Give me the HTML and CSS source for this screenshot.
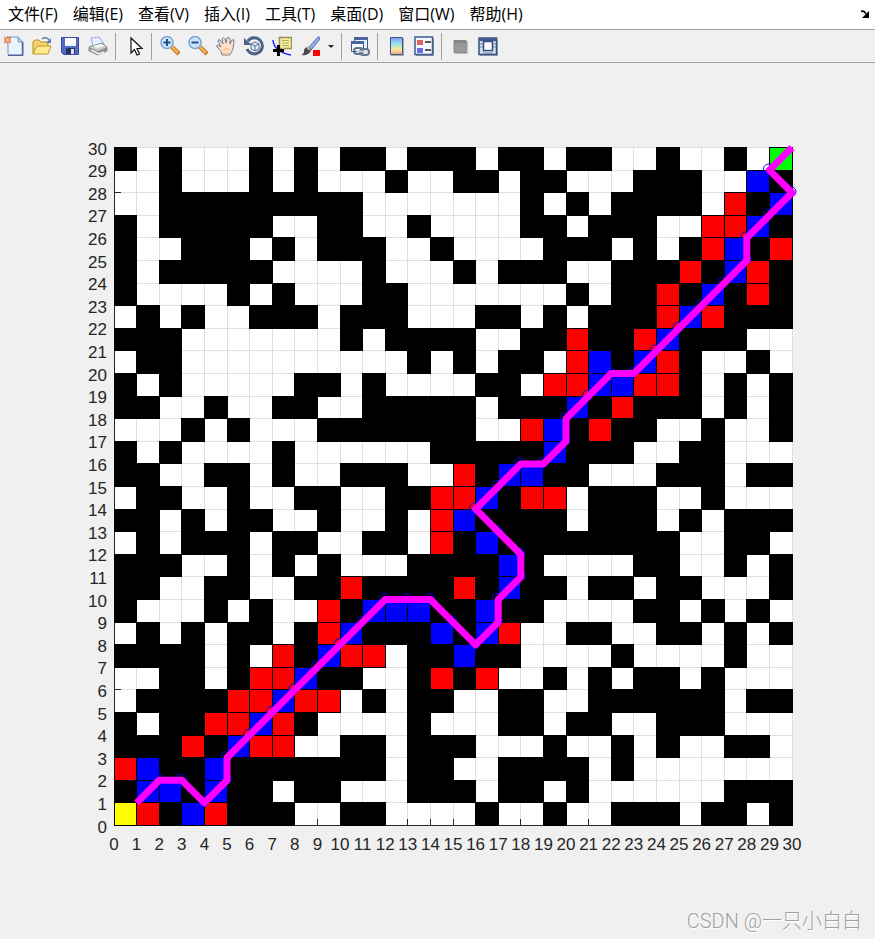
FILE: index.html
```html
<!DOCTYPE html>
<html lang="zh-CN">
  <head>
    <meta charset="utf-8" />
    <title>Figure 1</title>
    <link rel="stylesheet" href="styles.css">
  </head>
  <body>
    <nav class="menubar">
      <button class="menu">文件(F)</button>
      <button class="menu">编辑(E)</button>
      <button class="menu">查看(V)</button>
      <button class="menu">插入(I)</button>
      <button class="menu">工具(T)</button>
      <button class="menu">桌面(D)</button>
      <button class="menu">窗口(W)</button>
      <button class="menu">帮助(H)</button>
      <button class="menu dock" aria-label="停靠">
        <svg width="8" height="8" viewBox="0 0 8 8"><path d="M0 1.5Q3 0 5 4" fill="none" stroke="#000" stroke-width="1.6" /><path d="M8 1v7H1z" /></svg>
      </button>
    </nav>

    <div class="toolbar">
      <button class="tool" aria-label="新建">
        <svg viewBox="0 0 20 20">
          <path d="M4 1h10l5 5v13H4z" fill="#e9f4ff" stroke="#7b96bd" />
          <path d="M18.5 6v13.5H4" fill="none" stroke="#4d6796" stroke-width="1.5" />
          <path d="M14 1v5h5z" fill="#b7d3f1" stroke="#7b96bd" />
          <path d="M0 1l7 6M7 1L0 7M3.5 0v8M0 4h7" stroke="#e07b50" stroke-width="1.5" />
          <circle cx="3.5" cy="4" r="1.5" fill="#ffd291" />
        </svg>
      </button>
      <button class="tool" aria-label="打开">
        <svg viewBox="0 0 20 20">
          <path d="M1 18V6l2-2h4l2 2h7v4" fill="#f3d36b" stroke="#b98b22" />
          <path d="M1 18l4-8h14l-3 8z" fill="#ffe991" stroke="#c2962b" />
          <path d="M10 3q4-3 7 1" fill="none" stroke="#5f7dac" stroke-width="1.5" />
          <path d="M19 2v5h-5z" fill="#5f7dac" />
        </svg>
      </button>
      <button class="tool" aria-label="保存">
        <svg viewBox="0 0 20 20">
          <path d="M1.500 1.500h17v17h-15l-2-2z" fill="#5269c6" stroke="#3c4a9c" />
          <path d="M5 2h11v8H5z" fill="#eaf5ff" />
          <path d="M5 2h11v4L5 9z" fill="#fff" />
          <path d="M6 12h9v6H6z" fill="#283263" />
          <path d="M11 13h3v5h-3z" fill="#dde3f5" />
        </svg>
      </button>
      <button class="tool" aria-label="打印">
        <svg viewBox="0 0 20 20">
          <path d="M5 10L3 2l8-1 5 7z" fill="#e5f1ff" stroke="#93abd0" />
          <path d="M1 11l13-4 5 4v4l-9 4-9-4z" fill="#cfcfcf" stroke="#888" />
          <path d="M1 11l9 4 9-4v4l-9 4-9-4z" fill="#929292" />
          <path d="M3 14l8 4 5-2" fill="none" stroke="#f4f4f4" stroke-width="1.5" />
          <path d="M5 10l8-2 3 2-7 2z" fill="#f7f7f7" />
        </svg>
      </button>
      <span class="separator"></span>
      <button class="tool" aria-label="编辑绘图">
        <svg viewBox="0 0 20 20">
          <path d="M7 2v15l3.500-3.500 2.500 5.500 2.500-1-2.500-5.500h5z" fill="#fff" stroke="#111" stroke-width="1.200" />
        </svg>
      </button>
      <span class="separator"></span>
      <button class="tool" aria-label="放大">
        <svg viewBox="0 0 20 20">
          <path d="M12 11l7 7" stroke="#b7762d" stroke-width="4.500" />
          <path d="M12 11l6 6" stroke="#f6b04d" stroke-width="2.500" />
          <circle cx="7" cy="6.500" r="6" fill="#c9e7fb" stroke="#7aa2d3" stroke-width="1.500" />
          <path d="M3.500 6.500h7M7 3v7" stroke="#244b8f" stroke-width="2" />
        </svg>
      </button>
      <button class="tool" aria-label="缩小">
        <svg viewBox="0 0 20 20">
          <path d="M12 11l7 7" stroke="#b7762d" stroke-width="4.500" />
          <path d="M12 11l6 6" stroke="#f6b04d" stroke-width="2.500" />
          <circle cx="7" cy="6.500" r="6" fill="#c9e7fb" stroke="#7aa2d3" stroke-width="1.500" />
          <path d="M3.500 6.500h7" stroke="#244b8f" stroke-width="2" />
        </svg>
      </button>
      <button class="tool" aria-label="平移">
        <svg viewBox="0 0 20 20">
          <path d="M6 19l-1-4-4-4q-1-2 1-2l3 2-3-6q0-2 2-1l3 4-1-5q1-3 3 0l1 4 1-5q2-2 3 1v5l2-4q2-1 2 1l-1 8-3 6z" fill="#ffe0c2" stroke="#6f7da3" />
          <path d="M7 14q4-3 7 0" fill="none" stroke="#e8b388" />
          <path d="M6.500 18h7" stroke="#edb887" stroke-width="2" />
        </svg>
      </button>
      <button class="tool" aria-label="三维旋转">
        <svg viewBox="0 0 20 20">
          <path d="M4 5a8 8 0 1 1-1 8" fill="none" stroke="#4b6289" stroke-width="3" />
          <path d="M0 2v7h8z" fill="#4b6289" />
          <path d="M7 8l4-2 4 2v5l-4 2-4-2zM7 8l4 2 4-2M11 10v5" fill="#e2ecf7" stroke="#516b96" />
        </svg>
      </button>
      <button class="tool" aria-label="数据游标">
        <svg viewBox="0 0 20 20">
          <path d="M1 4q1 12 18 15" fill="none" stroke="#2020ff" stroke-width="1.500" />
          <path d="M7.500 1.500h12v11h-7l-3 3v-3h-2z" fill="#f6efa0" stroke="#99914a" stroke-width="1.500" />
          <path d="M10 4.500h7M10 7h7M10 9.500h7" stroke="#b3aa61" />
          <path d="M1 14.500h11M6.500 9v11" stroke="#000" stroke-width="3" />
        </svg>
      </button>
      <button class="tool" aria-label="刷亮">
        <svg viewBox="0 0 20 20">
          <path d="M8 12L18 1q3 0 2 2L11 14z" fill="#9aabed" stroke="#5a67ad" />
          <path d="M7 11q5 1 4 4-3 5-10 4 3-1 3-4 0-3 3-4z" fill="#4b4943" />
          <path d="M7 11l3 3" stroke="#bbb6a7" stroke-width="2" />
          <path d="M13 14h7v6h-7z" fill="#f00" />
        </svg>
      </button>
      <button class="tool arrow" aria-label="刷亮选项">
        <svg viewBox="0 0 6 20"><path d="M0 9h6l-3 3z" fill="#222" /></svg>
      </button>
      <span class="separator"></span>
      <button class="tool" aria-label="链接绘图">
        <svg viewBox="0 0 20 20">
          <path d="M4.500 1.500h13v11h-13z" fill="#edf3fc" stroke="#3f5888" />
          <path d="M4 1h14v3H4z" fill="#49659d" />
          <path d="M1.500 5.500h12v10h-12z" fill="#f5faff" stroke="#3f5888" />
          <path d="M1 5h13v3H1z" fill="#49659d" />
          <g fill="none" stroke="#63758e" stroke-width="2">
            <rect x="4" y="12" width="9" height="6" rx="3" />
            <rect x="10" y="13" width="9" height="6" rx="3" />
          </g>
          <path d="M7 15.500h9" stroke="#c8d8ea" stroke-width="1.500" />
        </svg>
      </button>
      <span class="separator"></span>
      <button class="tool" aria-label="颜色栏">
        <svg viewBox="0 0 20 20">
          <defs>
            <linearGradient id="bar" x2="0" y2="1">
              <stop offset="0" stop-color="#8394f0" />
              <stop offset=".35" stop-color="#90e2f1" />
              <stop offset=".7" stop-color="#f8e998" />
              <stop offset="1" stop-color="#f29b87" />
            </linearGradient>
          </defs>
          <path d="M5 2h13v18H5z" fill="#aaa" />
          <path d="M4.500 1.500h12v17h-12z" fill="url(#bar)" stroke="#3d588e" />
        </svg>
      </button>
      <button class="tool" aria-label="图例">
        <svg viewBox="0 0 20 20">
          <path d="M2 2h18v18H2z" fill="#8995aa" />
          <path d="M1 1h17.500v17.500H1z" fill="#f3f7ff" stroke="#405a8d" stroke-width="1.500" />
          <path d="M3 4h6v5H3z" fill="#e26060" />
          <path d="M3 12h6v5H3z" fill="#6b6bea" />
          <path d="M11 6h6M11 14h6" stroke="#222" stroke-width="1.500" />
        </svg>
      </button>
      <span class="separator"></span>
      <button class="tool" aria-label="隐藏绘图工具" disabled>
        <svg viewBox="0 0 20 20">
          <path d="M5 5h13v13H5z" fill="#bdbdbd" />
          <path d="M4 4.500h12v12H4z" fill="#999" stroke="#858585" />
          <path d="M4 6h12" stroke="#777" />
        </svg>
      </button>
      <button class="tool" aria-label="显示绘图工具">
        <svg viewBox="0 0 20 20">
          <path d="M2 3h18v17H2z" fill="#a5abb7" />
          <path d="M1 2h17.500v16.500H1z" fill="#d5deef" stroke="#344c7e" stroke-width="1.500" />
          <path d="M1 2h18v3H1z" fill="#405b94" />
          <path d="M5.500 5.500h9v9h-9z" fill="#fff" stroke="#344c7e" stroke-width="1.500" />
          <path d="M2 8h3M2 11h3M15 8h3M15 11h3M5 17h10" stroke="#7385a8" />
        </svg>
      </button>
    </div>

    <main class="figure">
      <svg class="plot" viewBox="0 0 875 876" role="img" aria-label="30 × 30 栅格地图">
        <g class="axes" transform="translate(114 84.500)"></g>
      </svg>
      <div class="watermark">CSDN @一只小白白</div>
    </main>
    <script src="plot.js"></script>
  </body>
</html>
```
FILE: styles.css
```css
* {
  box-sizing: border-box;
}

body {
  margin: 0;
  background-color: #f0f0f0;
  font-family: "Open Sans", "Noto Sans CJK SC", sans-serif;
}

button {
  margin: 0;
  padding: 0;
  border: none;
  background: none;
  color: #000;
  font: inherit;
}

.menubar {
  display: flex;
  align-items: center;
  gap: 15px;
  height: 30px;
  padding: 0 6px 2px 8px;
  background-color: #fff;
  border-bottom: 1px solid #a0a0a0;
  font-size: 16px;
  line-height: 20px;
}

.menu {
  white-space: nowrap;
}

.dock {
  display: flex;
  margin-left: auto;
}

.toolbar {
  display: flex;
  align-items: center;
  gap: 8px;
  height: 33px;
  padding: 0 4px;
  border-bottom: 1px solid #a0a0a0;
}

.tool {
  width: 20px;
  height: 20px;
}

.tool svg {
  display: block;
  width: 100%;
  height: 100%;
}

.arrow {
  width: 6px;
}

.separator {
  width: 1px;
  height: 27px;
  margin-left: -1px;
  background-color: #a0a0a0;
}

.figure {
  position: relative;
}

.plot {
  display: block;
  width: 100%;
  height: auto;
}

.background {
  fill: #fff;
}

.grid {
  stroke: #dfdfdf;
  shape-rendering: crispEdges;
}

.cell {
  stroke: #000;
  shape-rendering: crispEdges;
}

.ruler {
  fill: none;
  stroke: #262626;
  shape-rendering: crispEdges;
}

.tick {
  fill: #262626;
  font-family: "Liberation Sans", Arial, sans-serif;
  font-size: 17px;
}

.tick-x {
  text-anchor: middle;
}

.tick-y {
  text-anchor: end;
}

.marker {
  fill: none;
  stroke: #00f;
}

.route {
  fill: none;
  stroke: #f0f;
  stroke-width: 7;
  stroke-linejoin: round;
}

.watermark {
  position: absolute;
  right: 13px;
  bottom: 4px;
  color: #a0a0a0;
  font-family: Roboto, "Noto Sans CJK SC", sans-serif;
  font-size: 20px;
  font-weight: 300;
  line-height: 28px;
  text-shadow: 1px 1px 0 #fff;
}
```
FILE: plot.js
```js
// # wall, . free, R open list, B closed list, Y start, G goal
const map = [
  '#.#...#.#.##.###.##.##..#..#.G',
  '..#...#.#...#..##.##...###..B#',
  '..#########.......#.#.####.R#B',
  '#.#####..##..#....##.###..RRB#',
  '#..###.#.###..#....###.#.#RB#R',
  '#.#####....#...#.###..###R#BR#',
  '#....#.#...##.......#.##R#B#R#',
  '.#.#..###.###...##.#.###RBR###',
  '###.......#.####..##R##RB###..',
  '.##..........#.#.##.RB#BR#..#.',
  '#.#.....##.#....##.RRBBRR#.#.#',
  '##..#..##..#####.###B#R###.#.#',
  '...#.#...#######..RB#R##..#..#',
  '#.#....#......#####B###..##...',
  '##..##.#..###..R#BB##...###.##',
  '.##..#..##..##RRB#RR.###..#...',
  '##.#.##..#..#.RB####.###.#.###',
  '.#.###.##..##.R#B########..##.',
  '###..#.#.#...####B#....##..#.#',
  '##..##..##R####R#B##.##.##...#',
  '#...#.#..R#BBB##B##....##.#.#.',
  '.#.#.##.#RB###B#BR..##..##.#.#',
  '####.#.R#BRR.##B##....#....#..',
  '..##.#RRB##..#R#R..#.#.##.#...',
  '.####RRBRR.#.##..##..######.##',
  '#.##RRBR#....#...##.##..###...',
  '###R#BRR..##.###...#..#.#..##.',
  'RB##B#######.##..####.#.......',
  '#BB#B##.##...###.##.#......###',
  'YR#BR###..##....#..#..###.##.#',
];

const route = [
  [1, 1], [2, 2], [3, 2], [4, 1], [5, 2], [5, 3], [6, 4], [7, 5], [8, 6],
  [9, 7], [10, 8], [11, 9], [12, 10], [13, 10], [14, 10], [15, 9], [16, 8],
  [17, 9], [17, 10], [18, 11], [18, 12], [17, 13], [16, 14], [17, 15],
  [18, 16], [19, 16], [20, 17], [20, 18], [21, 19], [22, 20], [23, 20],
  [24, 21], [25, 22], [26, 23], [27, 24], [28, 25], [28, 26], [29, 27],
  [30, 28], [29, 29], [30, 30],
];

const colors = { '#': '#000', R: '#f00', B: '#00f', Y: '#ff0', G: '#0f0' };
const n = 30;
const size = 678;
const step = size / n;
const axes = document.querySelector('.axes');

function add(name, attributes, text) {
  const node = document.createElementNS('http://www.w3.org/2000/svg', name);
  for (const key in attributes) {
    node.setAttribute(key, attributes[key]);
  }
  if (text !== undefined) {
    node.textContent = text;
  }
  axes.append(node);
}

add('rect', { class: 'background', width: size, height: size });

let grid = '';
let ruler = `M0 0V${size}H${size}`;
for (let i = 0; i <= n; i++) {
  const p = i * step;
  grid += `M${p} 0V${size}M0 ${p}H${size}`;
  ruler += `M${p} ${size}v-7M0 ${p}h7`;
}
add('path', { class: 'grid', d: grid });
add('path', { class: 'ruler', d: ruler });

map.forEach((row, y) => {
  [...row].forEach((cell, x) => {
    if (cell !== '.') {
      add('rect', {
        class: 'cell',
        x: x * step,
        y: y * step,
        width: step,
        height: step,
        fill: colors[cell],
      });
    }
  });
});

const points = route.map(([x, y]) => [x * step, size - y * step]);
points.slice(1, -1).forEach(([x, y]) => {
  add('circle', { class: 'marker', cx: x - 1, cy: y - 1, r: 5 });
});
add('polyline', { class: 'route', points: points.join(' ') });

for (let i = 0; i <= n; i++) {
  add('text', { class: 'tick tick-x', x: i * step, y: size + 24 }, i);
  add('text', { class: 'tick tick-y', x: -7, y: size - i * step + 7 }, i);
}
```
